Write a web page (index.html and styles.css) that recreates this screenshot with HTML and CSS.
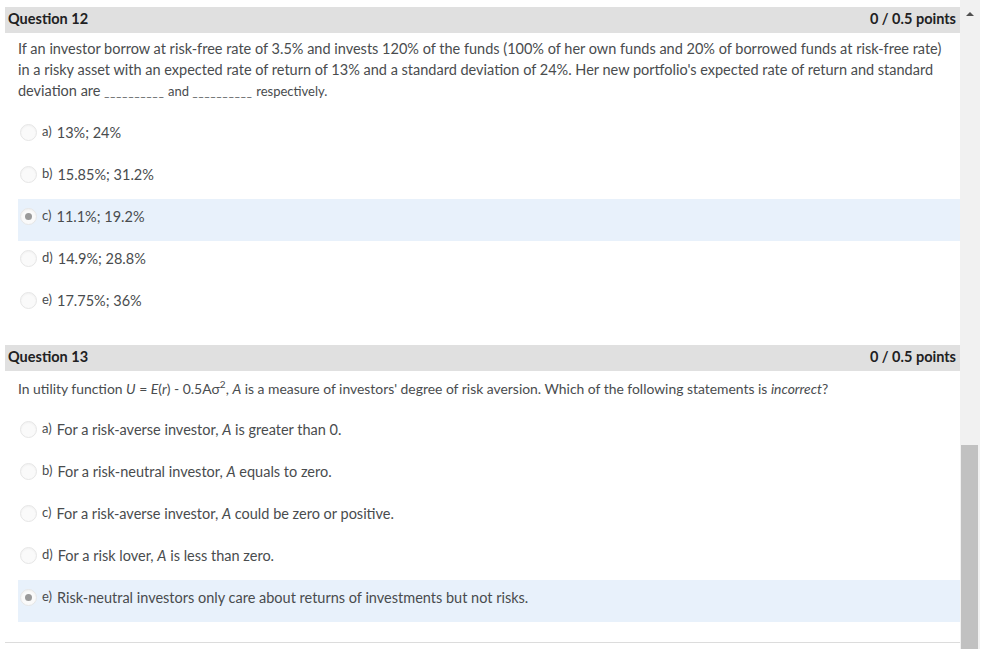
FILE: index.html
```html
<!DOCTYPE html>
<html>
<head>
<meta charset="utf-8">
<link rel="stylesheet" href="styles.css">
</head>
<body>
<div class="page">
  <div class="content">
    <section class="question">
      <div class="q-header"><span>Question 12</span><span>0 / 0.5 points</span></div>
      <p class="q-text big">If an investor borrow at risk-free rate of 3.5% and invests 120% of the funds (100% of her own funds and 20% of borrowed funds at risk-free rate) in a risky asset with an expected rate of return of 13% and a standard deviation of 24%. Her new portfolio's expected rate of return and standard <span class="last">deviation are <span class="small"><span class="blank">__________</span> and <span class="blank">__________</span> respectively.</span></span></p>
      <div class="options">
        <div class="opt"><span class="radio"></span><span class="lbl">a)</span><span class="ans">13%; 24%</span></div>
        <div class="opt"><span class="radio"></span><span class="lbl">b)</span><span class="ans">15.85%; 31.2%</span></div>
        <div class="opt sel"><span class="radio"></span><span class="lbl">c)</span><span class="ans">11.1%; 19.2%</span></div>
        <div class="opt"><span class="radio"></span><span class="lbl">d)</span><span class="ans">14.9%; 28.8%</span></div>
        <div class="opt"><span class="radio"></span><span class="lbl">e)</span><span class="ans">17.75%; 36%</span></div>
      </div>
    </section>
    <section class="question">
      <div class="q-header"><span>Question 13</span><span>0 / 0.5 points</span></div>
      <p class="q-text tall">In utility function <i>U</i> = <i>E</i>(<i>r</i>) - 0.5Aσ<sup>2</sup>, <i>A</i> is a measure of investors' degree of risk aversion. Which of the following statements is <i>incorrect</i>?</p>
      <div class="options">
        <div class="opt"><span class="radio"></span><span class="lbl">a)</span><span class="ans">For a risk-averse investor, <i>A</i> is greater than 0.</span></div>
        <div class="opt"><span class="radio"></span><span class="lbl">b)</span><span class="ans">For a risk-neutral investor, <i>A</i> equals to zero.</span></div>
        <div class="opt"><span class="radio"></span><span class="lbl">c)</span><span class="ans">For a risk-averse investor, <i>A</i> could be zero or positive.</span></div>
        <div class="opt"><span class="radio"></span><span class="lbl">d)</span><span class="ans">For a risk lover, <i>A</i> is less than zero.</span></div>
        <div class="opt sel"><span class="radio"></span><span class="lbl">e)</span><span class="ans">Risk-neutral investors only care about returns of investments but not risks.</span></div>
      </div>
    </section>
    <div class="rule"></div>
  </div>
  <div class="scrollbar">
    <div class="arrow"></div>
    <div class="track"></div>
    <div class="thumb"></div>
  </div>
</div>
</body>
</html>
```

FILE: styles.css
```css
* { box-sizing: border-box; }
html, body { margin: 0; padding: 0; background: #fff; }
body {
  font-family: Lato, "Open Sans", "Liberation Sans", sans-serif;
  color: #494c4e;
  font-size: 14px;
  overflow: hidden;
}
.page {
  display: flex;
  height: 649px;
}
.content {
  width: 960px;
  padding-left: 5px;
  padding-top: 7px;
  flex: none;
}
.question { margin-bottom: 20px; }
.q-header {
  display: flex;
  justify-content: space-between;
  align-items: center;
  height: 26px;
  background: #e0e0e0;
  padding: 0 4px 3px 3px;
  font-weight: bold;
  font-size: 14.5px;
  color: #202122;
}
.q-text {
  margin: 5px 6px 0 13px;
  line-height: 21px;
  font-size: 13.9px;
}
.q-text.big { font-size: 14.5px; }
.q-text.tall { padding-top: 2px; }
.q-text .last { white-space: nowrap; }
.q-text .small { font-size: 13px; }
.q-text .blank { font-size: 11px; letter-spacing: 1px; }
.q-text sup { font-size: 10px; line-height: 0; }
.options { margin-top: 13px; margin-left: 13px; }
.opt {
  height: 42px;
  display: flex;
  align-items: flex-start;
  padding-top: 8px;
  padding-left: 2px;
  line-height: 20px;
}
.opt.sel { background: #e8f1fb; }
.radio {
  width: 17px;
  height: 17px;
  border-radius: 50%;
  border: 1px solid #e6e6e6;
  background: #fafafa;
  box-shadow: inset 0 1px 2px rgba(0,0,0,0.04);
  margin-top: 1px;
  flex: none;
  display: flex;
  align-items: center;
  justify-content: center;
}
.sel .radio::after {
  content: "";
  width: 7px;
  height: 7px;
  border-radius: 50%;
  background: #9a9a9a;
}
.lbl {
  font-size: 13px;
  margin-left: 5px;
  margin-top: -2px;
  margin-right: 5px;
}
.ans { font-size: 14.5px; }
.rule {
  height: 1px;
  background: #dcdcdc;
}
.scrollbar {
  width: 20px;
  flex: none;
  background: #f1f1f1;
  display: flex;
  flex-direction: column;
}
.arrow {
  height: 17px;
  display: flex;
  justify-content: center;
  padding-top: 12px;
}
.arrow::before {
  content: "";
  width: 0;
  height: 0;
  border-left: 4px solid transparent;
  border-right: 4px solid transparent;
  border-bottom: 4px solid #505050;
}
.track { flex: 1; }
.thumb {
  height: 204px;
  margin: 0 2px 0 1px;
  background: #c1c1c1;
}
```
